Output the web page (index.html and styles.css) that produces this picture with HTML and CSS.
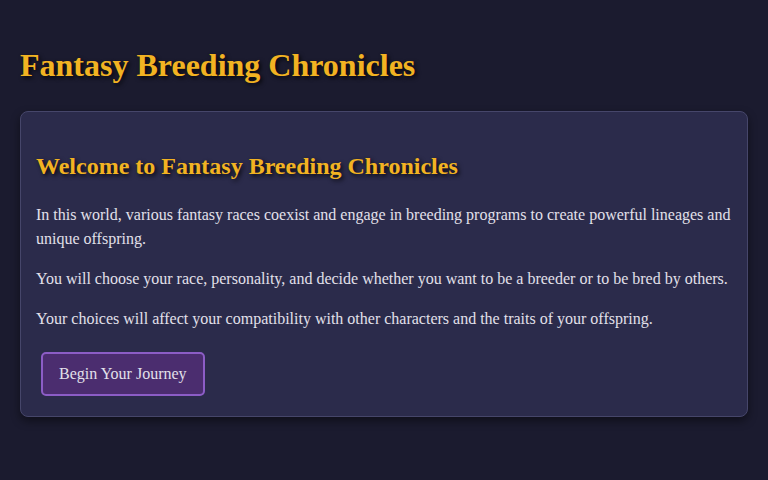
FILE: index.html
```html
<!DOCTYPE html>
<html lang="en">
<head>
    <meta charset="UTF-8">
    <title>Fantasy Breeding Chronicles</title>
    <link rel="stylesheet" href="styles.css">
</head>
<body>
<div class="game">
    <h1 class="title">Fantasy Breeding Chronicles</h1>
    <div class="panel">
        <h2>Welcome to Fantasy Breeding Chronicles</h2>
        <p>In this world, various fantasy races coexist and engage in breeding programs to create powerful lineages and unique offspring.</p>
        <p>You will choose your race, personality, and decide whether you want to be a breeder or to be bred by others.</p>
        <p>Your choices will affect your compatibility with other characters and the traits of your offspring.</p>
        <button class="btn">Begin Your Journey</button>
    </div>
</div>
</body>
</html>
```

FILE: styles.css
```css
body {
    margin: 0;
    background: #1b1b2f;
    color: #e2e0ea;
    font-family: "Liberation Serif", "Times New Roman", serif;
    line-height: 1.5;
}

.game {
    padding: 20px;
}

h1, h2 {
    color: #f2b322;
    text-shadow: 2px 2px 4px rgba(0, 0, 0, 0.8);
}

.title {
    font-size: 32px;
    margin: 21px 0 22px;
}

.panel {
    background: #2b2b4b;
    border: 1px solid #46466a;
    border-radius: 8px;
    padding: 15px;
    box-shadow: 0 4px 10px rgba(0, 0, 0, 0.45);
}

.panel h2 {
    font-size: 24px;
    margin: 21px 0 19px;
}

.panel p {
    margin: 16px 0;
}

.btn {
    margin: 5px;
    padding: 11px 16px;
    font-family: inherit;
    font-size: 16px;
    color: #e2e0ea;
    background: #4b2d6f;
    border: 2px solid #8c5dc6;
    border-radius: 5px;
    cursor: pointer;
}
```
